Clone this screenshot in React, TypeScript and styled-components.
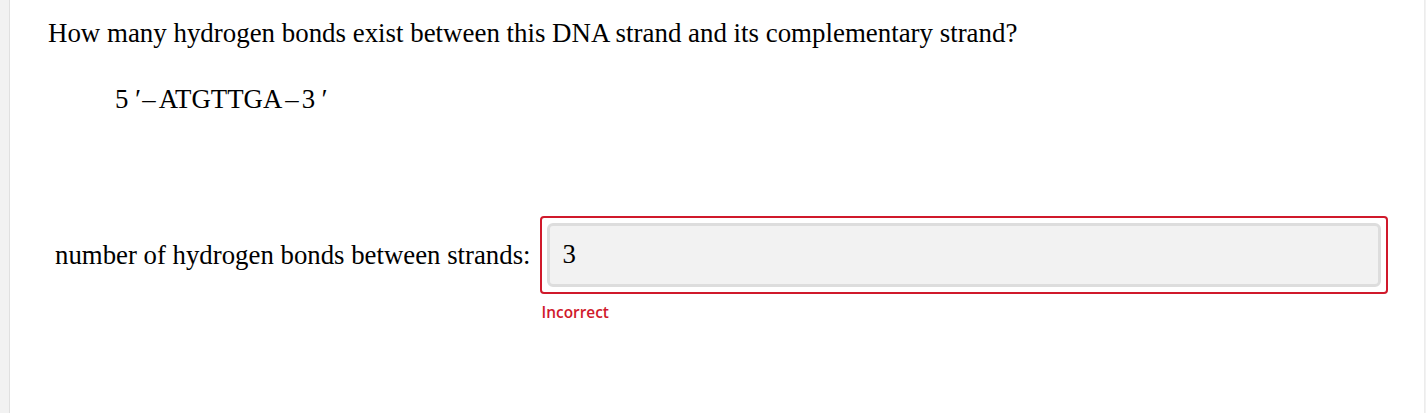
import React from "react";
import styled, { createGlobalStyle } from "styled-components";

const Global = createGlobalStyle`
  html, body { margin: 0; padding: 0; background: #ffffff; }
  body { font-family: "Liberation Serif", "Times New Roman", serif; color: #000; }
`;

const Page = styled.div`
  display: flex;
  height: 413px;
  background: #f2f2f2;
`;

const Gutter = styled.div`
  width: 9px;
  flex: none;
  background: #f2f2f2;
`;

const Panel = styled.div`
  flex: 1;
  background: #ffffff;
  border-left: 1px solid #e0e0e0;
  border-right: 1px solid #ececec;
  margin-right: 1px;
  padding: 17px 0 0 38px;
  box-sizing: border-box;
`;

const Question = styled.p`
  margin: 0;
  font-size: 26.9px;
  line-height: 32px;
`;

const MathLine = styled.div`
  margin: 34px 0 0 67px;
  font-size: 26.8px;
  line-height: 32px;
  display: flex;
  align-items: baseline;
`;

const Prime = styled.span`
  font-style: italic;
  margin-left: 5px;
`;

const Dash = styled.span`
  margin: 0 3px;
`;

const AnswerRow = styled.div`
  margin-top: 101px;
  display: flex;
  align-items: flex-start;
`;

const Label = styled.label`
  font-size: 26.8px;
  line-height: 32px;
  margin: 23px 9px 0 7px;
  white-space: nowrap;
`;

const FieldCol = styled.div`
  display: flex;
  flex-direction: column;
  width: 848px;
`;

const ErrorFrame = styled.div`
  border: 2px solid #d0192b;
  border-radius: 4px;
  padding: 5px;
  height: 78px;
  box-sizing: border-box;
`;

const Input = styled.div`
  height: 100%;
  box-sizing: border-box;
  border: 3px solid #dddddd;
  border-radius: 6px;
  background: #f2f2f2;
  font-size: 26.8px;
  line-height: 32px;
  padding: 12px 0 0 13px;
`;

const ErrorText = styled.div`
  margin-top: 9px;
  margin-left: 2px;
  font-family: "Open Sans", "Noto Sans", sans-serif;
  font-weight: 600;
  font-size: 15.4px;
  line-height: 20px;
  color: #d0192b;
`;

export default function App() {
  return (
    <>
      <Global />
      <Page>
        <Gutter />
        <Panel>
          <Question>
            How many hydrogen bonds exist between this DNA strand and its complementary strand?
          </Question>
          <MathLine>
            <span>5</span>
            <Prime>′</Prime>
            <Dash>–</Dash>
            <span>ATGTTGA</span>
            <Dash>–</Dash>
            <span>3</span>
            <Prime>′</Prime>
          </MathLine>
          <AnswerRow>
            <Label>number of hydrogen bonds between strands:</Label>
            <FieldCol>
              <ErrorFrame>
                <Input>3</Input>
              </ErrorFrame>
              <ErrorText>Incorrect</ErrorText>
            </FieldCol>
          </AnswerRow>
        </Panel>
      </Page>
    </>
  );
}
